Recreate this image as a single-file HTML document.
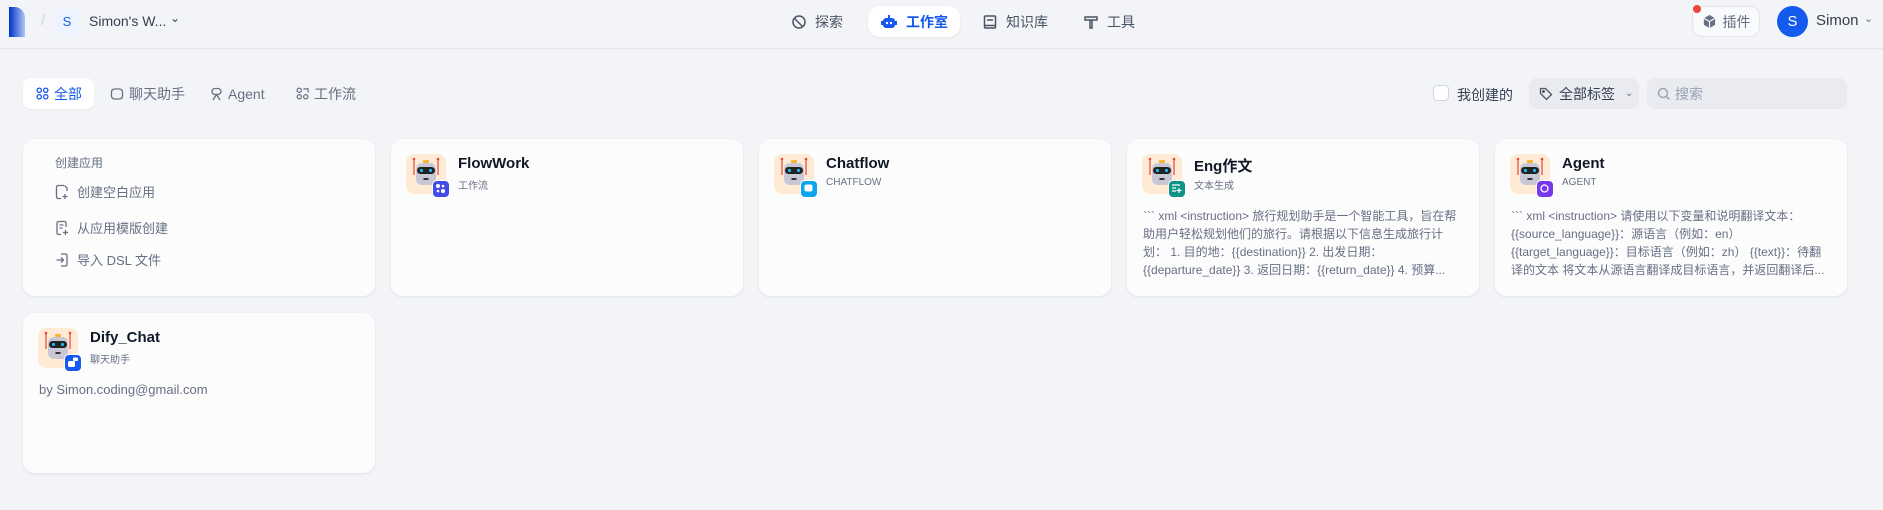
<!DOCTYPE html>
<html><head><meta charset="utf-8"><style>
*{box-sizing:border-box;margin:0;padding:0}
body{width:1883px;height:510px;background:#f2f4f7;font-family:"Liberation Sans","Noto Sans CJK SC",sans-serif;color:#354052;position:relative;overflow:hidden}
.hdr{position:absolute;left:0;top:0;width:1883px;height:49px;border-bottom:1px solid #e3e5ea}
.abs{position:absolute}
.nav{position:absolute;top:6px;height:31px;display:flex;align-items:center;font-size:14px;color:#495464;gap:8px;white-space:nowrap}
.nav.act{background:#fff;border-radius:12px;color:#155aef;font-weight:bold;padding:0 12px;box-shadow:0 1px 3px rgba(0,0,0,.06)}
.tab{position:absolute;top:78px;height:31px;display:flex;align-items:center;font-size:14px;color:#676f83;gap:5px;white-space:nowrap}
.card{position:absolute;width:352px;height:158px;background:#fcfcfd;border-radius:12px;box-shadow:0 1px 3px rgba(16,24,40,.08)}
.ic{position:absolute;left:15px;top:15px;width:40px;height:40px;border-radius:8px;background:#ffead5}
.badge{position:absolute;left:26px;top:26px;width:18px;height:18px;border-radius:5px;border:1.5px solid #fff}
.tt{position:absolute;left:67px;top:16px;font-size:15px;font-weight:bold;color:#101828}
.st{position:absolute;left:67px;top:38px;font-size:10px;color:#676f83}
.ds{position:absolute;left:16px;top:68px;width:320px;font-size:12px;line-height:18px;color:#676f83}
</style></head><body>
<div class="hdr">
 <svg class="abs" style="left:9px;top:7px" width="16" height="30" viewBox="0 0 16 30"><defs><linearGradient id="lg" x1="0" x2="1"><stop offset="0" stop-color="#0033cc"/><stop offset="1" stop-color="#b0c4f5"/></linearGradient></defs><path d="M0 0h6a10 11 0 0 1 10 11v19H0z" fill="url(#lg)"/></svg>
 <div class="abs" style="left:41px;top:12px;color:#d0d5dd;font-size:16px">/</div>
 <div class="abs" style="left:54px;top:9px;width:26px;height:26px;border-radius:6px;background:#eef4ff;color:#155aef;font-size:13px;text-align:center;line-height:26px">S</div>
 <div class="abs" style="left:89px;top:13px;font-size:14px;color:#354052">Simon's W...</div>
 <div class="abs" style="left:170px;top:11px;font-size:12px;color:#354052">⌄</div>

 <div class="nav" style="left:791px"><svg width="16" height="16" viewBox="0 0 16 16" fill="none" stroke="#495464" stroke-width="1.5"><circle cx="8" cy="8" r="6"/><path d="M3 4l9 9"/></svg>探索</div>
 <div class="nav act" style="left:868px"><svg width="18" height="16" viewBox="0 0 18 16"><rect x="3" y="4" width="12" height="10" rx="3" fill="#155aef"/><rect x="8" y="1" width="2" height="3" fill="#155aef"/><rect x="1" y="7" width="2" height="4" fill="#155aef"/><rect x="15" y="7" width="2" height="4" fill="#155aef"/><circle cx="7" cy="9" r="1.2" fill="#fff"/><circle cx="11" cy="9" r="1.2" fill="#fff"/></svg>工作室</div>
 <div class="nav" style="left:982px"><svg width="16" height="16" viewBox="0 0 16 16" fill="none" stroke="#495464" stroke-width="1.5"><rect x="2.5" y="2" width="11" height="12" rx="1"/><path d="M5 6h6M2.5 11.5h11"/></svg>知识库</div>
 <div class="nav" style="left:1083px"><svg width="16" height="16" viewBox="0 0 16 16" fill="none" stroke="#495464" stroke-width="1.5"><path d="M2 3h12v3H2zM7 6v8h2V6"/></svg>工具</div>

 <div class="abs" style="left:1692px;top:6px;width:68px;height:31px;border:1px solid #e3e5ea;border-radius:10px;background:#f9fafb;font-size:14px;color:#676f83;display:flex;align-items:center;justify-content:center;gap:6px"><svg width="15" height="15" viewBox="0 0 16 16"><path d="M8 1l6 3.5v7L8 15l-6-3.5v-7z" fill="#676f83"/><path d="M2 4.5L8 8l6-3.5M8 8v7" stroke="#f9fafb" stroke-width="1.2" fill="none"/></svg>插件</div>
 <div class="abs" style="left:1693px;top:5px;width:8px;height:8px;border-radius:50%;background:#f04438"></div>
 <div class="abs" style="left:1777px;top:6px;width:31px;height:31px;border-radius:50%;background:#155aef;color:#fff;font-size:15px;text-align:center;line-height:31px">S</div>
 <div class="abs" style="left:1816px;top:12px;font-size:15px;color:#354052">Simon</div>
 <div class="abs" style="left:1864px;top:12px;font-size:11px;color:#676f83">⌄</div>
</div>

<div class="abs" style="left:23px;top:78px;width:71px;height:31px;background:#fff;border-radius:8px;box-shadow:0 1px 2px rgba(0,0,0,.05)"></div>
<div class="tab" style="left:36px;color:#155aef"><svg width="13" height="13" viewBox="0 0 14 14" fill="none" stroke="#155aef" stroke-width="1.4"><circle cx="3.5" cy="3.5" r="2.3"/><circle cx="10.5" cy="3.5" r="2.3"/><circle cx="3.5" cy="10.5" r="2.3"/><circle cx="10.5" cy="10.5" r="2.3"/></svg>全部</div>
<div class="tab" style="left:110px"><svg width="14" height="14" viewBox="0 0 14 14" fill="none" stroke="#676f83" stroke-width="1.3"><rect x="1.5" y="2" width="11" height="10" rx="3"/><path d="M5 7v.1M9 7v.1"/></svg>聊天助手</div>
<div class="tab" style="left:210px"><svg width="13" height="14" viewBox="0 0 13 14" fill="none" stroke="#676f83" stroke-width="1.3"><rect x="2" y="1.5" width="9" height="6" rx="3"/><path d="M3 13l3.5-5.5L10 13"/></svg>Agent</div>
<div class="tab" style="left:296px"><svg width="13" height="13" viewBox="0 0 14 14" fill="none" stroke="#676f83" stroke-width="1.3"><circle cx="3.5" cy="3.5" r="2.3"/><circle cx="10.5" cy="10.5" r="2.3"/><circle cx="3.5" cy="10.5" r="2.3"/><path d="M8 2h5v4"/></svg>工作流</div>

<div class="abs" style="left:1433px;top:85px;width:16px;height:16px;border:1px solid #d0d5dd;border-radius:4px;background:#fff"></div>
<div class="abs" style="left:1457px;top:85px;font-size:14px;color:#354052">我创建的</div>
<div class="abs" style="left:1529px;top:78px;width:110px;height:31px;background:#e9ebf0;border-radius:8px;font-size:14px;color:#354052;display:flex;align-items:center;padding-left:10px;gap:6px;white-space:nowrap"><svg width="14" height="14" viewBox="0 0 14 14" fill="none" stroke="#495464" stroke-width="1.3"><path d="M1.5 1.5h5l6 6-5 5-6-6z"/><circle cx="4.5" cy="4.5" r=".8"/></svg>全部标签<span style="font-size:10px;color:#676f83;margin-left:4px">⌄</span></div>
<div class="abs" style="left:1647px;top:78px;width:200px;height:31px;background:#e9ebf0;border-radius:8px;font-size:14px;color:#98a2b3;display:flex;align-items:center;padding-left:10px;gap:4px"><svg width="14" height="14" viewBox="0 0 14 14" fill="none" stroke="#98a2b3" stroke-width="1.4"><circle cx="6" cy="6" r="4.5"/><path d="M9.5 9.5l3 3"/></svg>搜索</div>

<div class="card" style="left:23px;top:139px;height:157px">
 <div class="abs" style="left:32px;top:15px;font-size:12px;color:#676f83">创建应用</div>
 <div class="abs" style="left:32px;top:43px;font-size:13px;color:#676f83;display:flex;gap:8px;align-items:center"><svg width="14" height="16" viewBox="0 0 14 16" fill="none" stroke="#676f83" stroke-width="1.3"><path d="M9 1.5H3a1.5 1.5 0 0 0-1.5 1.5v10A1.5 1.5 0 0 0 3 14.5h3M12 7V4L9.5 1.5M10 10v5M7.5 12.5h5"/></svg>创建空白应用</div>
 <div class="abs" style="left:32px;top:79px;font-size:13px;color:#676f83;display:flex;gap:8px;align-items:center"><svg width="14" height="16" viewBox="0 0 14 16" fill="none" stroke="#676f83" stroke-width="1.3"><path d="M11 7V3a1.5 1.5 0 0 0-1.5-1.5h-6A1.5 1.5 0 0 0 2 3v10a1.5 1.5 0 0 0 1.5 1.5H6M4.5 5h4M4.5 8h3M10.5 10v5M8 12.5h5"/></svg>从应用模版创建</div>
 <div class="abs" style="left:32px;top:111px;font-size:13px;color:#676f83;display:flex;gap:8px;align-items:center"><svg width="14" height="16" viewBox="0 0 14 16" fill="none" stroke="#676f83" stroke-width="1.3"><path d="M6 2h4.5A1.5 1.5 0 0 1 12 3.5v9a1.5 1.5 0 0 1-1.5 1.5H6M1.5 8h7M6 5.5L8.5 8 6 10.5"/></svg>导入 DSL 文件</div>
</div>

<svg width="0" height="0" style="position:absolute"><defs><g id="rb"><rect x="17" y="6" width="6" height="3" rx="1" fill="#f7b538"/><path d="M8 5v16M32 5v16" stroke="#e6463a" stroke-width="1.2"/><circle cx="8" cy="5" r="1.3" fill="#e6463a"/><circle cx="32" cy="5" r="1.3" fill="#e6463a"/><rect x="10" y="9" width="20" height="22" rx="6" fill="#c9c7d6"/><rect x="11" y="13" width="18" height="7" rx="3.5" fill="#222"/><rect x="14" y="15" width="3" height="3" rx="1" fill="#22b8f0"/><rect x="23" y="15" width="3" height="3" rx="1" fill="#22b8f0"/><rect x="17.5" y="24" width="5" height="2" fill="#333"/></g></defs></svg>

<div class="card" style="left:391px;top:139px;height:157px">
 <div class="ic"><svg width="40" height="40"><use href="#rb"/></svg><div class="badge" style="background:#444ce7"><svg width="15" height="15" viewBox="0 0 15 15" fill="#fff"><circle cx="5" cy="5" r="2"/><circle cx="10" cy="10" r="2"/><circle cx="10" cy="5" r="1.3"/><circle cx="5" cy="10" r="1.3"/></svg></div></div>
 <div class="tt">FlowWork</div><div class="st">工作流</div>
</div>
<div class="card" style="left:759px;top:139px;height:157px">
 <div class="ic"><svg width="40" height="40"><use href="#rb"/></svg><div class="badge" style="background:#0ba5ec"><svg width="15" height="15" viewBox="0 0 15 15"><rect x="3.5" y="3.5" width="8" height="7" rx="2" fill="#fff"/></svg></div></div>
 <div class="tt">Chatflow</div><div class="st">CHATFLOW</div>
</div>
<div class="card" style="left:1127px;top:139px;height:157px">
 <div class="ic"><svg width="40" height="40"><use href="#rb"/></svg><div class="badge" style="background:#0e9384"><svg width="15" height="15" viewBox="0 0 15 15" fill="none" stroke="#fff" stroke-width="1.2"><path d="M3 4h8M3 7h4M3 10h4M10 7v5M7.5 9.5h5"/></svg></div></div>
 <div class="tt">Eng作文</div><div class="st">文本生成</div>
 <div class="ds">&#96;&#96;&#96; xml &lt;instruction&gt; 旅行规划助手是一个智能工具，旨在帮助用户轻松规划他们的旅行。请根据以下信息生成旅行计划： 1. 目的地：&#123;&#123;destination&#125;&#125; 2. 出发日期：&#123;&#123;departure_date&#125;&#125; 3. 返回日期：&#123;&#123;return_date&#125;&#125; 4. 预算...</div>
</div>
<div class="card" style="left:1495px;top:139px;height:157px">
 <div class="ic"><svg width="40" height="40"><use href="#rb"/></svg><div class="badge" style="background:#7839ee"><svg width="15" height="15" viewBox="0 0 15 15" fill="none" stroke="#fff" stroke-width="1.3"><circle cx="7.5" cy="7.5" r="3.5"/></svg></div></div>
 <div class="tt">Agent</div><div class="st">AGENT</div>
 <div class="ds">&#96;&#96;&#96; xml &lt;instruction&gt; 请使用以下变量和说明翻译文本： &#123;&#123;source_language&#125;&#125;：源语言（例如：en） &#123;&#123;target_language&#125;&#125;：目标语言（例如：zh） &#123;&#123;text&#125;&#125;：待翻译的文本 将文本从源语言翻译成目标语言，并返回翻译后...</div>
</div>
<div class="card" style="left:23px;top:313px;height:160px">
 <div class="ic"><svg width="40" height="40"><use href="#rb"/></svg><div class="badge" style="background:#155aef"><svg width="15" height="15" viewBox="0 0 15 15" fill="#fff"><rect x="3" y="6" width="7" height="6" rx="1.5"/><rect x="8" y="2.5" width="5" height="3.5" rx="1"/></svg></div></div>
 <div class="tt">Dify_Chat</div><div class="st">聊天助手</div>
 <div class="ds" style="font-size:13px">by Simon.coding@gmail.com</div>
</div>
</body></html>
